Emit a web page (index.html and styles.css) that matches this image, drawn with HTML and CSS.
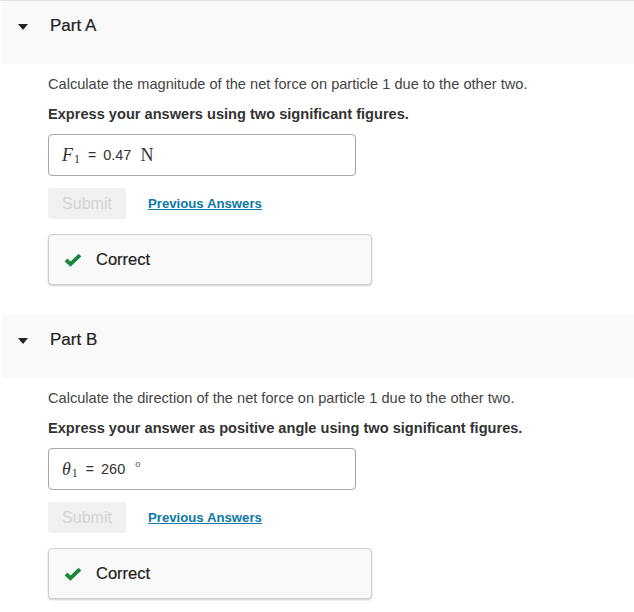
FILE: index.html
```html
<!DOCTYPE html>
<html lang="en">
<head>
    <meta charset="UTF-8">
    <title>Parts</title>
    <link rel="stylesheet" href="styles.css">
</head>
<body>
    <div class="parts">
        <div class="part">
            <div class="part-header">
                <span class="caret"></span>
                <span class="part-title">Part A</span>
            </div>
            <div class="part-body">
                <p class="prompt">Calculate the magnitude of the net force on particle 1 due to the other two.</p>
                <p class="instruction">Express your answers using two significant figures.</p>
                <div class="answer-box">
                    <span class="math-var">F</span><sub class="math-sub">1</sub>
                    <span class="eq">=</span>
                    <span class="value">0.47</span>
                    <span class="unit">N</span>
                </div>
                <div class="actions">
                    <button class="submit" disabled>Submit</button>
                    <a href="#" class="prev-link">Previous Answers</a>
                </div>
                <div class="feedback">
                    <svg class="check" width="18" height="14" viewBox="0 0 18 14"><path d="M2 7 L6.5 11.2 L16 2.2" fill="none" stroke="#18873c" stroke-width="3.8"/></svg>
                    <span>Correct</span>
                </div>
            </div>
        </div>

        <div class="part">
            <div class="part-header">
                <span class="caret"></span>
                <span class="part-title">Part B</span>
            </div>
            <div class="part-body">
                <p class="prompt">Calculate the direction of the net force on particle 1 due to the other two.</p>
                <p class="instruction">Express your answer as positive angle using two significant figures.</p>
                <div class="answer-box">
                    <span class="math-var">&theta;</span><sub class="math-sub">1</sub>
                    <span class="eq">=</span>
                    <span class="value">260</span>
                    <sup class="degree">o</sup>
                </div>
                <div class="actions">
                    <button class="submit" disabled>Submit</button>
                    <a href="#" class="prev-link">Previous Answers</a>
                </div>
                <div class="feedback">
                    <svg class="check" width="18" height="14" viewBox="0 0 18 14"><path d="M2 7 L6.5 11.2 L16 2.2" fill="none" stroke="#18873c" stroke-width="3.8"/></svg>
                    <span>Correct</span>
                </div>
            </div>
        </div>
    </div>
</body>
</html>
```

FILE: styles.css
```css
body {
    margin: 0;
    font-family: "Liberation Sans", Arial, sans-serif;
    color: #333;
    background: white;
}
.parts {
    border-top: 1px solid #e2e2e2;
}
.part {
    margin-bottom: 30px;
}
.part-header {
    height: 63px;
    margin-left: 2px;
    background: #f9f9f9;
    display: flex;
    align-items: flex-start;
    padding: 15px 0 0 16px;
    box-sizing: border-box;
}
.caret {
    width: 0;
    height: 0;
    margin-top: 8px;
    border-left: 5px solid transparent;
    border-right: 5px solid transparent;
    border-top: 6px solid #222;
}
.part-title {
    margin-left: 22px;
    font-size: 17px;
    line-height: 20px;
    color: #222;
    -webkit-text-stroke: 0.2px #222;
}
.part-body {
    padding: 10px 0 0 48px;
}
.prompt, .instruction {
    margin: 0 0 10px;
    font-size: 14.6px;
    line-height: 20px;
}
.prompt { color: #444; }
.instruction {
    font-weight: bold;
    color: #333;
}
.answer-box {
    width: 308px;
    height: 42px;
    box-sizing: border-box;
    border: 1px solid #a6a6a6;
    border-radius: 4px;
    display: flex;
    align-items: center;
    padding-left: 13px;
    color: #333;
}
.math-var {
    font-family: "Liberation Serif", "Times New Roman", serif;
    font-style: italic;
    font-size: 18px;
}
.math-sub {
    font-family: "Liberation Serif", serif;
    font-size: 12px;
    align-self: center;
    margin-top: 8px;
    margin-left: 1px;
}
.eq {
    font-size: 14px;
    margin: 0 7px 0 8px;
}
.value {
    font-size: 14.5px;
}
.unit {
    font-family: "Liberation Serif", serif;
    font-size: 18px;
    margin-left: 9px;
}
.degree {
    font-family: "Liberation Serif", serif;
    font-size: 10px;
    margin-left: 10px;
    align-self: center;
    margin-top: -12px;
    color: #555;
}
.actions {
    display: flex;
    align-items: center;
    margin-top: 12px;
}
.submit {
    width: 78px;
    height: 31px;
    border: none;
    border-radius: 3px;
    background: #f0f0f0;
    color: #d3d3d3;
    font-family: "Liberation Sans", Arial, sans-serif;
    font-size: 16px;
    padding: 0;
}
.prev-link {
    margin-left: 22px;
    font-size: 13.2px;
    font-weight: bold;
    color: #0c7aa6;
    text-decoration: underline;
}
.feedback {
    width: 324px;
    height: 51px;
    box-sizing: border-box;
    margin-top: 15px;
    border: 1px solid #cfcfcf;
    border-radius: 4px;
    background: #f9f9f9;
    box-shadow: 0 1px 2px rgba(0,0,0,0.2);
    display: flex;
    align-items: center;
    padding-left: 15px;
    font-size: 16.5px;
    color: #222;
    -webkit-text-stroke: 0.2px #222;
}
.check {
    margin-right: 14px;
}
```
